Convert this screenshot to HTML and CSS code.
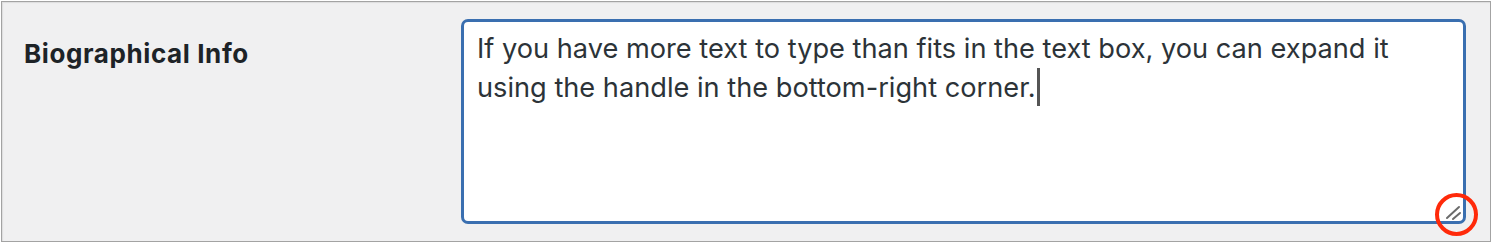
FILE: index.html
```html
<!DOCTYPE html>
<html lang="en">
<head>
    <meta charset="UTF-8">
    <meta name="viewport" content="width=device-width, initial-scale=1.0">
    <title>Biographical Info</title>
    <link rel="stylesheet" href="styles.css">
</head>
<body>

<div class="frame">
    <div class="form-row">
        <label class="field-label" for="description">Biographical Info</label>

        <div class="field">
            <div class="textarea" id="description">If you have more text to type than fits in the text box, you can expand it using the handle in the bottom-right corner.<span class="caret"></span></div>

            <!-- resize handle -->
            <svg class="resize-handle" width="18" height="18" viewBox="0 0 18 18">
                <line x1="3" y1="15" x2="15" y2="4" stroke="#6b6b6b" stroke-width="2" stroke-linecap="round"/>
                <line x1="9" y1="16" x2="16" y2="10" stroke="#6b6b6b" stroke-width="2" stroke-linecap="round"/>
            </svg>

            <!-- red highlight round the handle -->
            <span class="highlight"></span>
        </div>
    </div>
</div>

</body>
</html>
```

FILE: styles.css
```css
body {
    font-family: Inter, "Noto Sans", sans-serif;
    margin: 0;
    padding: 0;
    background-color: #fff;
}

.frame {
    margin: 1px 1px 0 1px;
    height: 239px;
    border: 1px solid #a3a3a3;
    background-color: #f0f0f1;
    box-shadow: inset 1px 1px 1px rgba(0, 0, 0, 0.08);
}

.form-row {
    display: grid;
    grid-template-columns: 437px 1fr;
    padding: 17px 24px 0 22px;
}

.field-label {
    font-size: 26px;
    font-weight: 700;
    letter-spacing: 0.6px;
    color: #1d2327;
    padding-top: 19px;
}

.field {
    position: relative;
}

.textarea {
    box-sizing: border-box;
    height: 205px;
    padding: 8px 40px 8px 13px;
    border: 3px solid #3a6fb0;
    border-radius: 7px;
    background-color: #fff;
    color: #2c3338;
    font-size: 27.2px;
    line-height: 38px;
}

.caret {
    display: inline-block;
    width: 3px;
    height: 38px;
    margin-left: 1px;
    vertical-align: -9px;
    background-color: #555;
}

.resize-handle {
    position: absolute;
    right: 4px;
    bottom: 3px;
}

.highlight {
    position: absolute;
    right: -12px;
    bottom: -12px;
    width: 35px;
    height: 35px;
    border: 4px solid #ff2a0a;
    border-radius: 50%;
}
```
